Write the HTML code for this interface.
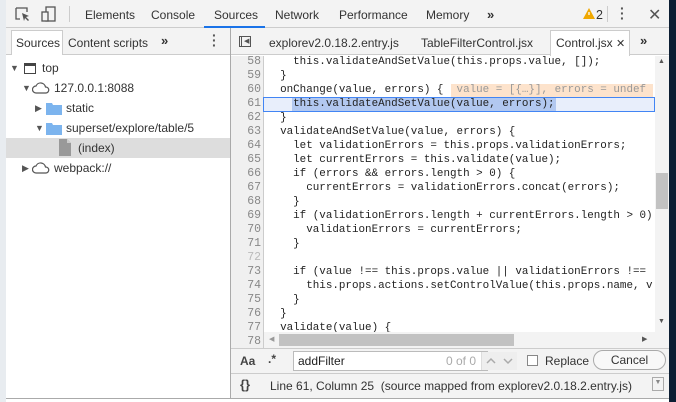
<!DOCTYPE html>
<html><head><style>
*{box-sizing:border-box;margin:0;padding:0}
body{width:676px;height:402px;overflow:hidden;background:#fff;font-family:"Liberation Sans",sans-serif;font-size:12px;color:#333;position:relative}
.abs{position:absolute}
.tab{position:absolute;top:0;height:27px;line-height:30px;font-size:12px;color:#333}
.ln{position:absolute;left:231px;width:30px;text-align:right;color:#888;font-family:"Liberation Mono",monospace;font-size:11.5px;height:14px;line-height:14px}
.cl{position:absolute;left:267px;white-space:pre;color:#222;font-family:"Liberation Mono",monospace;font-size:10.9px;height:14px;line-height:14px}
.tr{position:absolute;font-size:12px;color:#333;height:20px;line-height:20px}
</style></head><body>
<div class="abs" style="left:0;top:0;width:6px;height:402px;background:#e8ecf0"></div>
<div class="abs" style="left:669px;top:0;width:7px;height:402px;background:#0c1e33"></div>
<div class="abs" style="left:6px;top:0;width:663px;height:28px;background:#f3f3f3;border-bottom:1px solid #ccc"></div>
<svg class="abs" style="left:15px;top:7px" width="16" height="16" viewBox="0 0 16 16"><path d="M1 1h11v4M1 1v11h4" fill="none" stroke="#555" stroke-width="1.3"/><path d="M7 6l7 3-3 1 3 3-1 1-3-3-1 3z" fill="#555"/></svg>
<svg class="abs" style="left:41px;top:6px" width="16" height="17" viewBox="0 0 16 17"><rect x="5" y="1" width="9" height="14" fill="none" stroke="#555" stroke-width="1.3"/><rect x="1" y="6" width="6" height="9" fill="#f3f3f3" stroke="#555" stroke-width="1.3"/></svg>
<div class="abs" style="left:69px;top:6px;width:1px;height:16px;background:#ccc"></div>
<div class="tab" style="left:85px">Elements</div>
<div class="tab" style="left:151px">Console</div>
<div class="tab" style="left:214px">Sources</div>
<div class="abs" style="left:204px;top:26px;width:61px;height:2px;background:#1a73e8"></div>
<div class="tab" style="left:275px">Network</div>
<div class="tab" style="left:339px">Performance</div>
<div class="tab" style="left:426px">Memory</div>
<div class="tab" style="left:487px;font-weight:bold;font-size:13px">»</div>
<svg class="abs" style="left:583px;top:8px" width="12" height="11"><path d="M6 0l6 11H0z" fill="#f0a800"/><path d="M6 4v3" stroke="#fff" stroke-width="1.3"/></svg>
<div class="abs" style="left:596px;top:8px;font-size:12.5px">2</div>
<div class="abs" style="left:607px;top:6px;width:1px;height:16px;background:#ccc"></div>
<div class="abs" style="left:620px;top:6px;font-size:14px;font-weight:bold;color:#555;line-height:5px">·<br>·<br>·</div>
<div class="abs" style="left:648px;top:5px;font-size:16px;color:#555">✕</div>
<div class="abs" style="left:6px;top:28px;width:225px;height:371px;border-right:1px solid #aaa;border-bottom:1px solid #aaa"></div>
<div class="abs" style="left:6px;top:28px;width:224px;height:27px;background:#f3f3f3;border-bottom:1px solid #ccc"></div>
<div class="abs" style="left:11px;top:30px;width:52px;height:25px;background:#fff;border:1px solid #ccc;border-bottom:none;line-height:24px;padding-left:4px;font-size:12px">Sources</div>
<div class="abs" style="left:68px;top:36px;font-size:12px">Content scripts</div>
<div class="abs" style="left:161px;top:33px;font-size:13px;font-weight:bold">»</div>
<div class="abs" style="left:212px;top:33px;font-size:14px;font-weight:bold;color:#555;line-height:5px">·<br>·<br>·</div>
<div class="abs" style="left:6px;top:138px;width:224px;height:20px;background:#ddd"></div>
<div class="tr" style="left:10px;top:58px;font-size:9px;color:#555">▼</div>
<div class="abs" style="left:24px;top:63px;width:12px;height:11px;border:1.5px solid #444;border-top-width:3px"></div>
<div class="tr" style="left:42px;top:58px">top</div>
<div class="tr" style="left:22px;top:78px;font-size:9px;color:#555">▼</div>
<svg class="abs" style="left:32px;top:82px" width="18" height="12" viewBox="0 0 18 12"><path d="M4 11a3.5 3.5 0 0 1 0-7 5 5 0 0 1 9.5 1A3 3 0 0 1 14 11z" fill="none" stroke="#555" stroke-width="1.2"/></svg>
<div class="tr" style="left:54px;top:78px">127.0.0.1:8088</div>
<div class="tr" style="left:35px;top:98px;font-size:9px;color:#555">▶</div>
<svg class="abs" style="left:46px;top:102px" width="16" height="13"><path d="M0 1h6l1 2h9v10H0z" fill="#7cb4ee"/></svg>
<div class="tr" style="left:66px;top:98px">static</div>
<div class="tr" style="left:35px;top:118px;font-size:9px;color:#555">▼</div>
<svg class="abs" style="left:46px;top:122px" width="16" height="13"><path d="M0 1h6l1 2h9v10H0z" fill="#7cb4ee"/></svg>
<div class="tr" style="left:66px;top:118px">superset/explore/table/5</div>
<svg class="abs" style="left:59px;top:139px" width="12" height="17"><path d="M0 0h8l4 4v13H0z" fill="#999"/><path d="M8 0v4h4" fill="#ccc"/></svg>
<div class="tr" style="left:78px;top:138px">(index)</div>
<div class="tr" style="left:22px;top:158px;font-size:9px;color:#555">▶</div>
<svg class="abs" style="left:32px;top:162px" width="18" height="12" viewBox="0 0 18 12"><path d="M4 11a3.5 3.5 0 0 1 0-7 5 5 0 0 1 9.5 1A3 3 0 0 1 14 11z" fill="none" stroke="#555" stroke-width="1.2"/></svg>
<div class="tr" style="left:54px;top:158px">webpack://</div>
<div class="abs" style="left:231px;top:28px;width:438px;height:27px;background:#f3f3f3;border-bottom:1px solid #ccc"></div>
<div class="abs" style="left:239px;top:36px;width:12px;height:11px;border:1px solid #555"></div>
<div class="abs" style="left:241px;top:37px;width:1px;height:9px;background:#555"></div>
<div class="abs" style="left:244px;top:37px;font-size:7px;color:#555">◀</div>
<div class="abs" style="left:269px;top:36px;font-size:12px">explorev2.0.18.2.entry.js</div>
<div class="abs" style="left:421px;top:36px;font-size:12px">TableFilterControl.jsx</div>
<div class="abs" style="left:550px;top:30px;width:80px;height:26px;background:#fff;border:1px solid #ccc;border-bottom:none;padding-left:5px;line-height:25px;font-size:12px">Control.jsx <span style="font-size:11px">✕</span></div>
<div class="abs" style="left:640px;top:33px;font-size:13px;font-weight:bold">»</div>
<div class="abs" style="left:231px;top:56px;width:33px;height:292px;background:#f0f0f0;border-right:1px solid #ccc"></div>
<div class="abs" style="left:263px;top:97px;width:392px;height:15px;background:#e8eefb;border:1px solid #4285f4"></div>
<div class="abs" style="left:292px;top:98px;width:264px;height:13px;background:#b2c8f0"></div>
<div class="abs" style="left:451px;top:84px;width:202px;height:13px;background:#fde3cc"></div>
<div class="ln" style="top:55px">58</div><div class="cl" style="top:55px">    this.validateAndSetValue(this.props.value, []);</div>
<div class="ln" style="top:69px">59</div><div class="cl" style="top:69px">  }</div>
<div class="ln" style="top:83px">60</div><div class="cl" style="top:83px">  onChange(value, errors) {  <span style="color:#999">value = [{…}], errors = undef</span></div>
<div class="ln" style="top:97px">61</div><div class="cl" style="top:97px">    this.validateAndSetValue(value, errors);</div>
<div class="ln" style="top:111px">62</div><div class="cl" style="top:111px">  }</div>
<div class="ln" style="top:125px">63</div><div class="cl" style="top:125px">  validateAndSetValue(value, errors) {</div>
<div class="ln" style="top:139px">64</div><div class="cl" style="top:139px">    let validationErrors = this.props.validationErrors;</div>
<div class="ln" style="top:153px">65</div><div class="cl" style="top:153px">    let currentErrors = this.validate(value);</div>
<div class="ln" style="top:167px">66</div><div class="cl" style="top:167px">    if (errors &amp;&amp; errors.length &gt; 0) {</div>
<div class="ln" style="top:181px">67</div><div class="cl" style="top:181px">      currentErrors = validationErrors.concat(errors);</div>
<div class="ln" style="top:195px">68</div><div class="cl" style="top:195px">    }</div>
<div class="ln" style="top:209px">69</div><div class="cl" style="top:209px">    if (validationErrors.length + currentErrors.length &gt; 0)</div>
<div class="ln" style="top:223px">70</div><div class="cl" style="top:223px">      validationErrors = currentErrors;</div>
<div class="ln" style="top:237px">71</div><div class="cl" style="top:237px">    }</div>
<div class="ln" style="top:251px;color:#bbb">72</div>
<div class="ln" style="top:265px">73</div><div class="cl" style="top:265px">    if (value !== this.props.value || validationErrors !==</div>
<div class="ln" style="top:279px">74</div><div class="cl" style="top:279px">      this.props.actions.setControlValue(this.props.name, v</div>
<div class="ln" style="top:293px">75</div><div class="cl" style="top:293px">    }</div>
<div class="ln" style="top:307px">76</div><div class="cl" style="top:307px">  }</div>
<div class="ln" style="top:321px">77</div><div class="cl" style="top:321px;height:11px;overflow:hidden">  validate(value) {</div>
<div class="ln" style="top:335px">78</div>
<div class="abs" style="left:655px;top:56px;width:14px;height:292px;background:#f3f3f3"></div>
<div class="abs" style="left:656px;top:173px;width:12px;height:36px;background:#c2c2c2"></div>
<div class="abs" style="left:658px;top:58px;font-size:7px;color:#555">▲</div>
<div class="abs" style="left:658px;top:318px;font-size:7px;color:#555">▼</div>
<div class="abs" style="left:264px;top:332px;width:391px;height:16px;background:#f3f3f3"></div>
<div class="abs" style="left:279px;top:334px;width:235px;height:12px;background:#c2c2c2"></div>
<div class="abs" style="left:269px;top:335px;font-size:7px;color:#999">◀</div>
<div class="abs" style="left:642px;top:335px;font-size:7px;color:#555">▶</div>
<div class="abs" style="left:231px;top:348px;width:438px;height:26px;background:#f3f3f3;border-top:1px solid #ccc;border-bottom:1px solid #ccc"></div>
<div class="abs" style="left:240px;top:354px;font-size:12px;font-weight:bold;color:#444">Aa</div>
<div class="abs" style="left:268px;top:352px;font-size:12px;font-weight:bold;color:#444">.*</div>
<div class="abs" style="left:293px;top:351px;width:195px;height:20px;background:#fff;border:1px solid #bbb"></div>
<div class="abs" style="left:298px;top:354px;font-size:12px;color:#222">addFilter</div>
<div class="abs" style="left:446px;top:354px;font-size:12px;color:#aaa">0 of 0</div>
<div class="abs" style="left:481px;top:352px;width:1px;height:18px;background:#ddd"></div>
<div class="abs" style="left:482px;top:352px;width:35px;height:18px;background:#eee"></div>
<svg class="abs" style="left:486px;top:356px" width="28" height="10"><path d="M1 7l4-4 4 4M18 3l4 4 4-4" fill="none" stroke="#aaa" stroke-width="1.5"/></svg>
<div class="abs" style="left:527px;top:355px;width:11px;height:11px;border:1px solid #888;background:#fff"></div>
<div class="abs" style="left:545px;top:354px;font-size:12px">Replace</div>
<div class="abs" style="left:593px;top:350px;width:73px;height:20px;border:1px solid #aaa;border-radius:10px;background:#f8f8f8;text-align:center;line-height:18px;font-size:12px">Cancel</div>
<div class="abs" style="left:231px;top:374px;width:438px;height:25px;background:#f3f3f3;border-bottom:1px solid #aaa"></div>
<div class="abs" style="left:240px;top:377px;font-size:13px;font-weight:bold;color:#444">{}</div>
<div class="abs" style="left:270px;top:379px;font-size:12px;color:#333">Line 61, Column 25 &nbsp;(source mapped from explorev2.0.18.2.entry.js)</div>
<div class="abs" style="left:652px;top:377px;width:12px;height:14px;border:1px solid #aaa;font-size:7px;color:#888;text-align:center;line-height:9px">▼</div>
</body></html>
